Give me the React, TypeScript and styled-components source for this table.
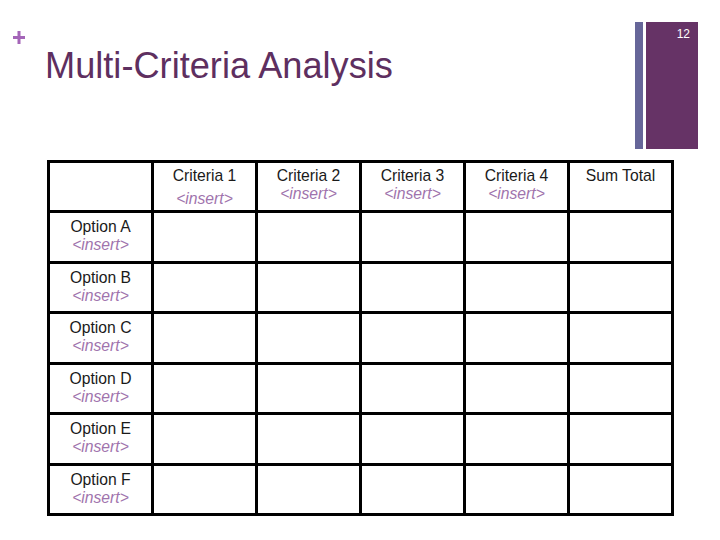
import React from "react";
import styled, { createGlobalStyle } from "styled-components";

const Global = createGlobalStyle`
  html, body { margin: 0; padding: 0; background: #fff; }
  body { font-family: "Liberation Sans", Arial, sans-serif; }
`;

const Page = styled.div`
  width: 720px;
  height: 540px;
  background: #fff;
  font-family: "Liberation Sans", Arial, sans-serif;
  overflow: hidden;
`;

const Header = styled.header`
  display: flex;
  justify-content: space-between;
  align-items: flex-start;
  height: 149px;
`;

const Brand = styled.div`
  display: flex;
  align-items: flex-start;
  padding-left: 13px;
`;

const PlusMark = styled.svg`
  display: block;
  margin-top: 31px;
  flex: none;
`;

const Title = styled.h1`
  margin: 46px 0 0 20px;
  font-size: 36.2px;
  line-height: 40px;
  font-weight: 400;
  color: #5e2f60;
  white-space: nowrap;
`;

const BarGroup = styled.div`
  display: flex;
  gap: 3px;
  margin: 22px 22px 0 0;
`;

const ThinBar = styled.div`
  width: 8px;
  height: 127px;
  background: #666699;
`;

const WideBar = styled.div`
  width: 52px;
  height: 127px;
  background: #663366;
  color: #fff;
  font-size: 12px;
  line-height: 14px;
  text-align: right;
  padding: 5px 8px 0 0;
  box-sizing: border-box;
`;

const Table = styled.div`
  display: grid;
  grid-template-columns: repeat(6, 1fr);
  grid-template-rows: repeat(7, 1fr);
  gap: 3px;
  padding: 3px;
  margin: 11px 0 0 47px;
  width: 627px;
  height: 356px;
  box-sizing: border-box;
  background: #000;
`;

const Cell = styled.div<{ $head?: boolean }>`
  background: #fff;
  text-align: center;
  padding-top: ${(p) => (p.$head ? 4 : 5)}px;
  font-size: 15.7px;
  line-height: 18px;
  color: #1a1a1a;
`;

const Label = styled.div`
  white-space: nowrap;
`;

const Insert = styled.div<{ $gap?: number }>`
  font-style: italic;
  color: #9f74ad;
  margin-top: ${(p) => p.$gap ?? 0}px;
  white-space: nowrap;
`;

const criteria = ["Criteria 1", "Criteria 2", "Criteria 3", "Criteria 4"];
const options = ["A", "B", "C", "D", "E", "F"];

export default function App() {
  return (
    <Page>
      <Global />
      <Header>
        <Brand>
          <PlusMark width="12" height="13" viewBox="0 0 12 13">
            <rect x="4.5" y="0" width="3" height="13" fill="#a465b8" />
            <rect x="0" y="5" width="12" height="3" fill="#a465b8" />
          </PlusMark>
          <Title>Multi-Criteria Analysis</Title>
        </Brand>
        <BarGroup>
          <ThinBar />
          <WideBar>12</WideBar>
        </BarGroup>
      </Header>
      <Table>
        <Cell $head />
        {criteria.map((c, i) => (
          <Cell $head key={c}>
            <Label>{c}</Label>
            <Insert $gap={i === 0 ? 5 : 0}>&lt;insert&gt;</Insert>
          </Cell>
        ))}
        <Cell $head>
          <Label>Sum Total</Label>
        </Cell>
        {options.map((o) => (
          <React.Fragment key={o}>
            <Cell>
              <Label>Option {o}</Label>
              <Insert>&lt;insert&gt;</Insert>
            </Cell>
            <Cell />
            <Cell />
            <Cell />
            <Cell />
            <Cell />
          </React.Fragment>
        ))}
      </Table>
    </Page>
  );
}
